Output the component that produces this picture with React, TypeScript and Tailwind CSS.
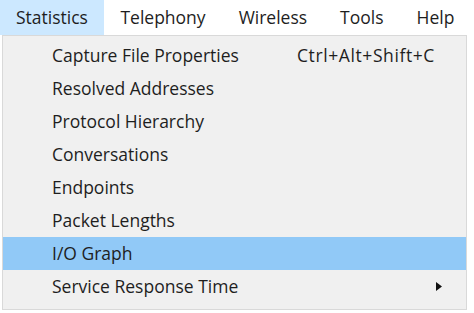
const menus = ['Statistics', 'Telephony', 'Wireless', 'Tools', 'Help'];

const items = [
  { label: 'Capture File Properties', shortcut: 'Ctrl+Alt+Shift+C' },
  { label: 'Resolved Addresses' },
  { label: 'Protocol Hierarchy' },
  { label: 'Conversations' },
  { label: 'Endpoints' },
  { label: 'Packet Lengths' },
  { label: 'I/O Graph', active: true },
  { label: 'Service Response Time', submenu: true },
];

export default function App() {
  return (
    <div
      className="w-[474px] h-[313px] bg-white overflow-hidden text-[#1e1e1e]"
      style={{ fontFamily: '"Open Sans", "Noto Sans", sans-serif' }}
    >
      {/* menu bar */}
      <div className="flex h-[35px] items-center text-[17.5px]">
        {menus.map((m, i) => (
          <div
            key={m}
            className={`h-full flex items-center ${i === 0 ? 'bg-[#cce8ff] px-[16px]' : 'px-[16.5px]'}`}
          >
            {m}
          </div>
        ))}
      </div>

      {/* dropdown */}
      <div className="ml-[2px] w-[465px] bg-[#f0f0f0] border border-[#d9d9d9] pt-[3px] pb-[6px] text-[17.5px]">
        {items.map((it) => (
          <div
            key={it.label}
            className={`flex items-center h-[33px] pl-[49px] pr-[31px] ${it.active ? 'bg-[#91c9f7]' : ''}`}
          >
            <span className="flex-1">{it.label}</span>
            {it.shortcut && <span className="tracking-[0.6px]">{it.shortcut}</span>}
            {it.submenu && (
              <svg width="6" height="9" viewBox="0 0 6 9" className="mr-[-7px]">
                <path d="M0 0 L6 4.5 L0 9 Z" fill="#111" />
              </svg>
            )}
          </div>
        ))}
      </div>
    </div>
  );
}
